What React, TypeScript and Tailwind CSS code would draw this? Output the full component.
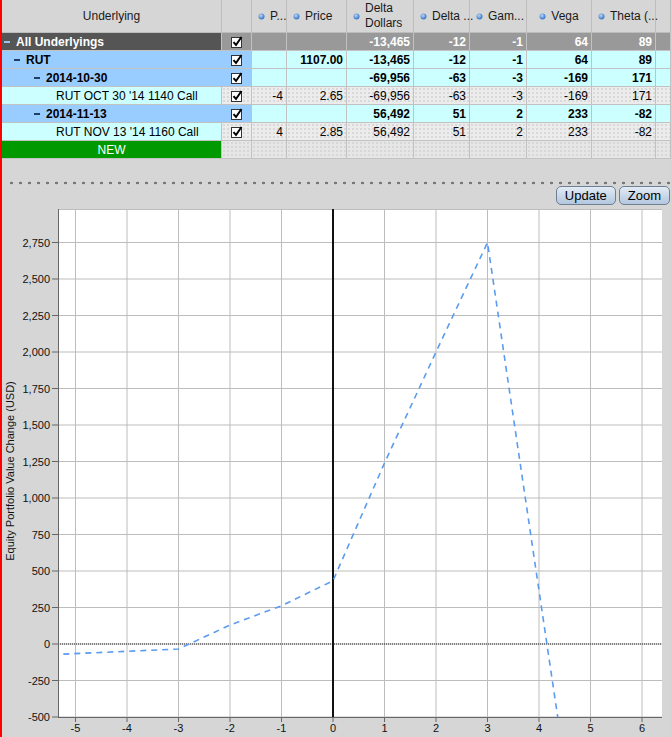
import React from 'react';

type Row = {
  kind: 'all' | 'group' | 'leaf';
  label: string;
  level: number;
  vals: string[];
};

const rows: Row[] = [
  { kind: 'all', label: 'All Underlyings', level: 0, vals: ['', '', '-13,465', '-12', '-1', '64', '89'] },
  { kind: 'group', label: 'RUT', level: 1, vals: ['', '1107.00', '-13,465', '-12', '-1', '64', '89'] },
  { kind: 'group', label: '2014-10-30', level: 2, vals: ['', '', '-69,956', '-63', '-3', '-169', '171'] },
  { kind: 'leaf', label: "RUT OCT 30 '14 1140 Call", level: 3, vals: ['-4', '2.65', '-69,956', '-63', '-3', '-169', '171'] },
  { kind: 'group', label: '2014-11-13', level: 2, vals: ['', '', '56,492', '51', '2', '233', '-82'] },
  { kind: 'leaf', label: "RUT NOV 13 '14 1160 Call", level: 3, vals: ['4', '2.85', '56,492', '51', '2', '233', '-82'] },
];

const dots = 'bg-[radial-gradient(circle,#cfcfcf_0.6px,transparent_0.9px)] bg-[length:4px_4px]';
const cell = 'border-r border-b border-[#c2c2c2] h-[18px] flex items-center';

const Dot = () => (
  <svg width="7" height="7" viewBox="0 0 7 7" className="shrink-0">
    <defs>
      <radialGradient id="bd" cx="40%" cy="35%" r="60%">
        <stop offset="0%" stopColor="#bcd6f5" />
        <stop offset="100%" stopColor="#3b78c8" />
      </radialGradient>
    </defs>
    <circle cx="3.5" cy="3.5" r="3" fill="url(#bd)" />
  </svg>
);

const Check = () => (
  <svg width="12" height="12" viewBox="0 0 12 12">
    <rect x="0.5" y="1.5" width="10" height="10" fill="#fff" stroke="#333" />
    <path d="M2.5 6.2 L5 9 L10.5 1" fill="none" stroke="#000" strokeWidth="2" />
  </svg>
);

const Head = ({ children, center }: { children: React.ReactNode; center?: boolean }) => (
  <div
    className={`border-r border-b border-[#bdbdbd] h-[33px] flex items-center gap-[5px] px-[6px] text-[12px] leading-[15px] text-[#1a1a1a] ${
      center ? 'justify-center' : ''
    }`}
  >
    {children}
  </div>
);

function Table() {
  return (
    <div className="grid grid-cols-[220px_30px_35px_60px_67px_56px_57px_65px_64px_15px] bg-[#d6d6d6]">
      <Head center>Underlying</Head>
      <Head> </Head>
      <Head>
        <Dot />
        <span>P...</span>
      </Head>
      <Head>
        <Dot />
        <span>Price</span>
      </Head>
      <Head>
        <Dot />
        <span>
          Delta
          <br />
          Dollars
        </span>
      </Head>
      <Head>
        <Dot />
        <span className="whitespace-nowrap">Delta ...</span>
      </Head>
      <Head>
        <Dot />
        <span className="whitespace-nowrap">Gam...</span>
      </Head>
      <Head center>
        <Dot />
        <span>Vega</span>
      </Head>
      <Head>
        <Dot />
        <span className="whitespace-nowrap">Theta (...</span>
      </Head>
      <Head> </Head>

      {rows.map((r, i) => {
        const labelBg =
          r.kind === 'all' ? 'bg-[#555555] text-white' : r.kind === 'group' ? 'bg-[#99ccff]' : 'bg-[#ccffff]';
        const checkBg = r.kind === 'all' ? 'bg-[#999999]' : r.kind === 'group' ? 'bg-[#99ccff]' : `bg-[#ececec] ${dots}`;
        const valBg =
          r.kind === 'all' ? 'bg-[#999999] text-white' : r.kind === 'group' ? 'bg-[#ccffff]' : `bg-[#ececec] ${dots}`;
        const weight = r.kind === 'leaf' ? 'font-normal' : 'font-bold';
        const pad = ['pl-[2px]', 'pl-[12px]', 'pl-[32px]', 'pl-[54px]'][r.level];
        return (
          <React.Fragment key={i}>
            <div className={`${cell} ${labelBg} ${pad} text-[12px] ${weight} ${r.kind === 'all' ? 'text-white' : 'text-black'}`}>
              {r.kind !== 'leaf' && (
                <span
                  className={`inline-block w-[6px] h-[2px] mr-[6px] ${r.kind === 'all' ? 'bg-[#9cc3ee]' : 'bg-[#1f3f66]'}`}
                />
              )}
              <span className="whitespace-nowrap">{r.label}</span>
            </div>
            <div className={`${cell} ${checkBg} justify-center`}>
              <Check />
            </div>
            {r.vals.map((v, j) => (
              <div key={j} className={`${cell} ${valBg} justify-end pr-[3px] text-[12px] ${weight}`}>
                {v}
              </div>
            ))}
            <div className={`${cell} ${valBg}`} />
          </React.Fragment>
        );
      })}

      <div className={`${cell} bg-[#009900] justify-center text-white text-[12px]`}>NEW</div>
      {Array.from({ length: 9 }).map((_, j) => (
        <div key={j} className={`${cell} bg-[#e6e6e6] ${dots}`} />
      ))}
    </div>
  );
}

const X = (v: number) => 331 + v * 51.5;
const Y = (v: number) => 437 - v * 0.146;

const pts: [number, number][] = [
  [-5.45, -73],
  [-3, -34],
  [-2, 130],
  [-1, 262],
  [0, 433],
  [1, 1240],
  [2, 2000],
  [3, 2750],
  [4.38, -540],
];

function Chart() {
  const xs = [-5, -4, -3, -2, -1, 0, 1, 2, 3, 4, 5, 6];
  const ys = [-500, -250, 0, 250, 500, 750, 1000, 1250, 1500, 1750, 2000, 2250, 2500, 2750];
  const fmt = (n: number) => n.toLocaleString('en-US');
  return (
    <svg width="669" height="530" viewBox="0 0 669 530" className="block font-['Liberation_Sans',Arial,sans-serif]">
      <defs>
        <clipPath id="plot">
          <rect x="56" y="2" width="604" height="508" />
        </clipPath>
      </defs>
      <rect x="56" y="2" width="604" height="508" fill="#fff" />
      {xs.map((v) => (
        <line key={`gx${v}`} x1={X(v)} x2={X(v)} y1="2" y2="510" stroke="#bdbdbd" strokeWidth="1" />
      ))}
      {ys.map((v) => (
        <line key={`gy${v}`} x1="56" x2="660" y1={Y(v)} y2={Y(v)} stroke="#bdbdbd" strokeWidth="1" />
      ))}
      <line x1="56" x2="660" y1="2.5" y2="2.5" stroke="#bdbdbd" />
      <line x1="56" x2="660" y1={Y(0)} y2={Y(0)} stroke="#222" strokeWidth="1" strokeDasharray="1 1" />
      <line x1={X(0)} x2={X(0)} y1="2" y2="510" stroke="#111" strokeWidth="2" />
      <polyline
        clipPath="url(#plot)"
        points={pts.map(([a, b]) => `${X(a)},${Y(b)}`).join(' ')}
        fill="none"
        stroke="#5b9bf0"
        strokeWidth="1.6"
        strokeDasharray="6 5"
      />
      <line x1="56.5" x2="56.5" y1="2" y2="511" stroke="#666" />
      <line x1="56" x2="660" y1="510.5" y2="510.5" stroke="#666" />
      {ys.map((v) => (
        <g key={`ty${v}`}>
          <line x1="50" x2="56" y1={Y(v)} y2={Y(v)} stroke="#666" />
          <text x="48" y={Y(v) + 4} textAnchor="end" fontSize="11" fill="#111">
            {fmt(v)}
          </text>
        </g>
      ))}
      {xs.map((v) => (
        <g key={`tx${v}`}>
          <line x1={X(v)} x2={X(v)} y1="510" y2="515" stroke="#666" />
          <text x={X(v)} y="525" textAnchor="middle" fontSize="11" fill="#111">
            {v}
          </text>
        </g>
      ))}
      <text x="12" y="264" transform="rotate(-90 12 264)" textAnchor="middle" fontSize="11" fill="#111">
        Equity Portfolio Value Change (USD)
      </text>
    </svg>
  );
}

export default function App() {
  return (
    <div className="w-[671px] h-[737px] overflow-hidden border-l-2 border-[#ff0000] bg-[#d6d6d6] font-['Liberation_Sans',Arial,sans-serif]">
      <Table />
      <div className="flex flex-col">
        <div className="h-[22px]" />
        <div className="ml-[5px] h-[4px] bg-[radial-gradient(circle,#777777_1.2px,transparent_1.6px)] bg-[length:9px_4px]" />
        <div className="flex justify-end gap-[3px] pr-[1px] pt-[1px] h-[22px]">
          {['Update', 'Zoom'].map((b) => (
            <button
              key={b}
              className="h-[19px] px-[8px] rounded-[5px] border border-[#6f7f92] bg-gradient-to-b from-[#e2ebf5] to-[#b3c7de] text-[13px] text-black leading-none"
            >
              {b}
            </button>
          ))}
        </div>
        <Chart />
      </div>
    </div>
  );
}
